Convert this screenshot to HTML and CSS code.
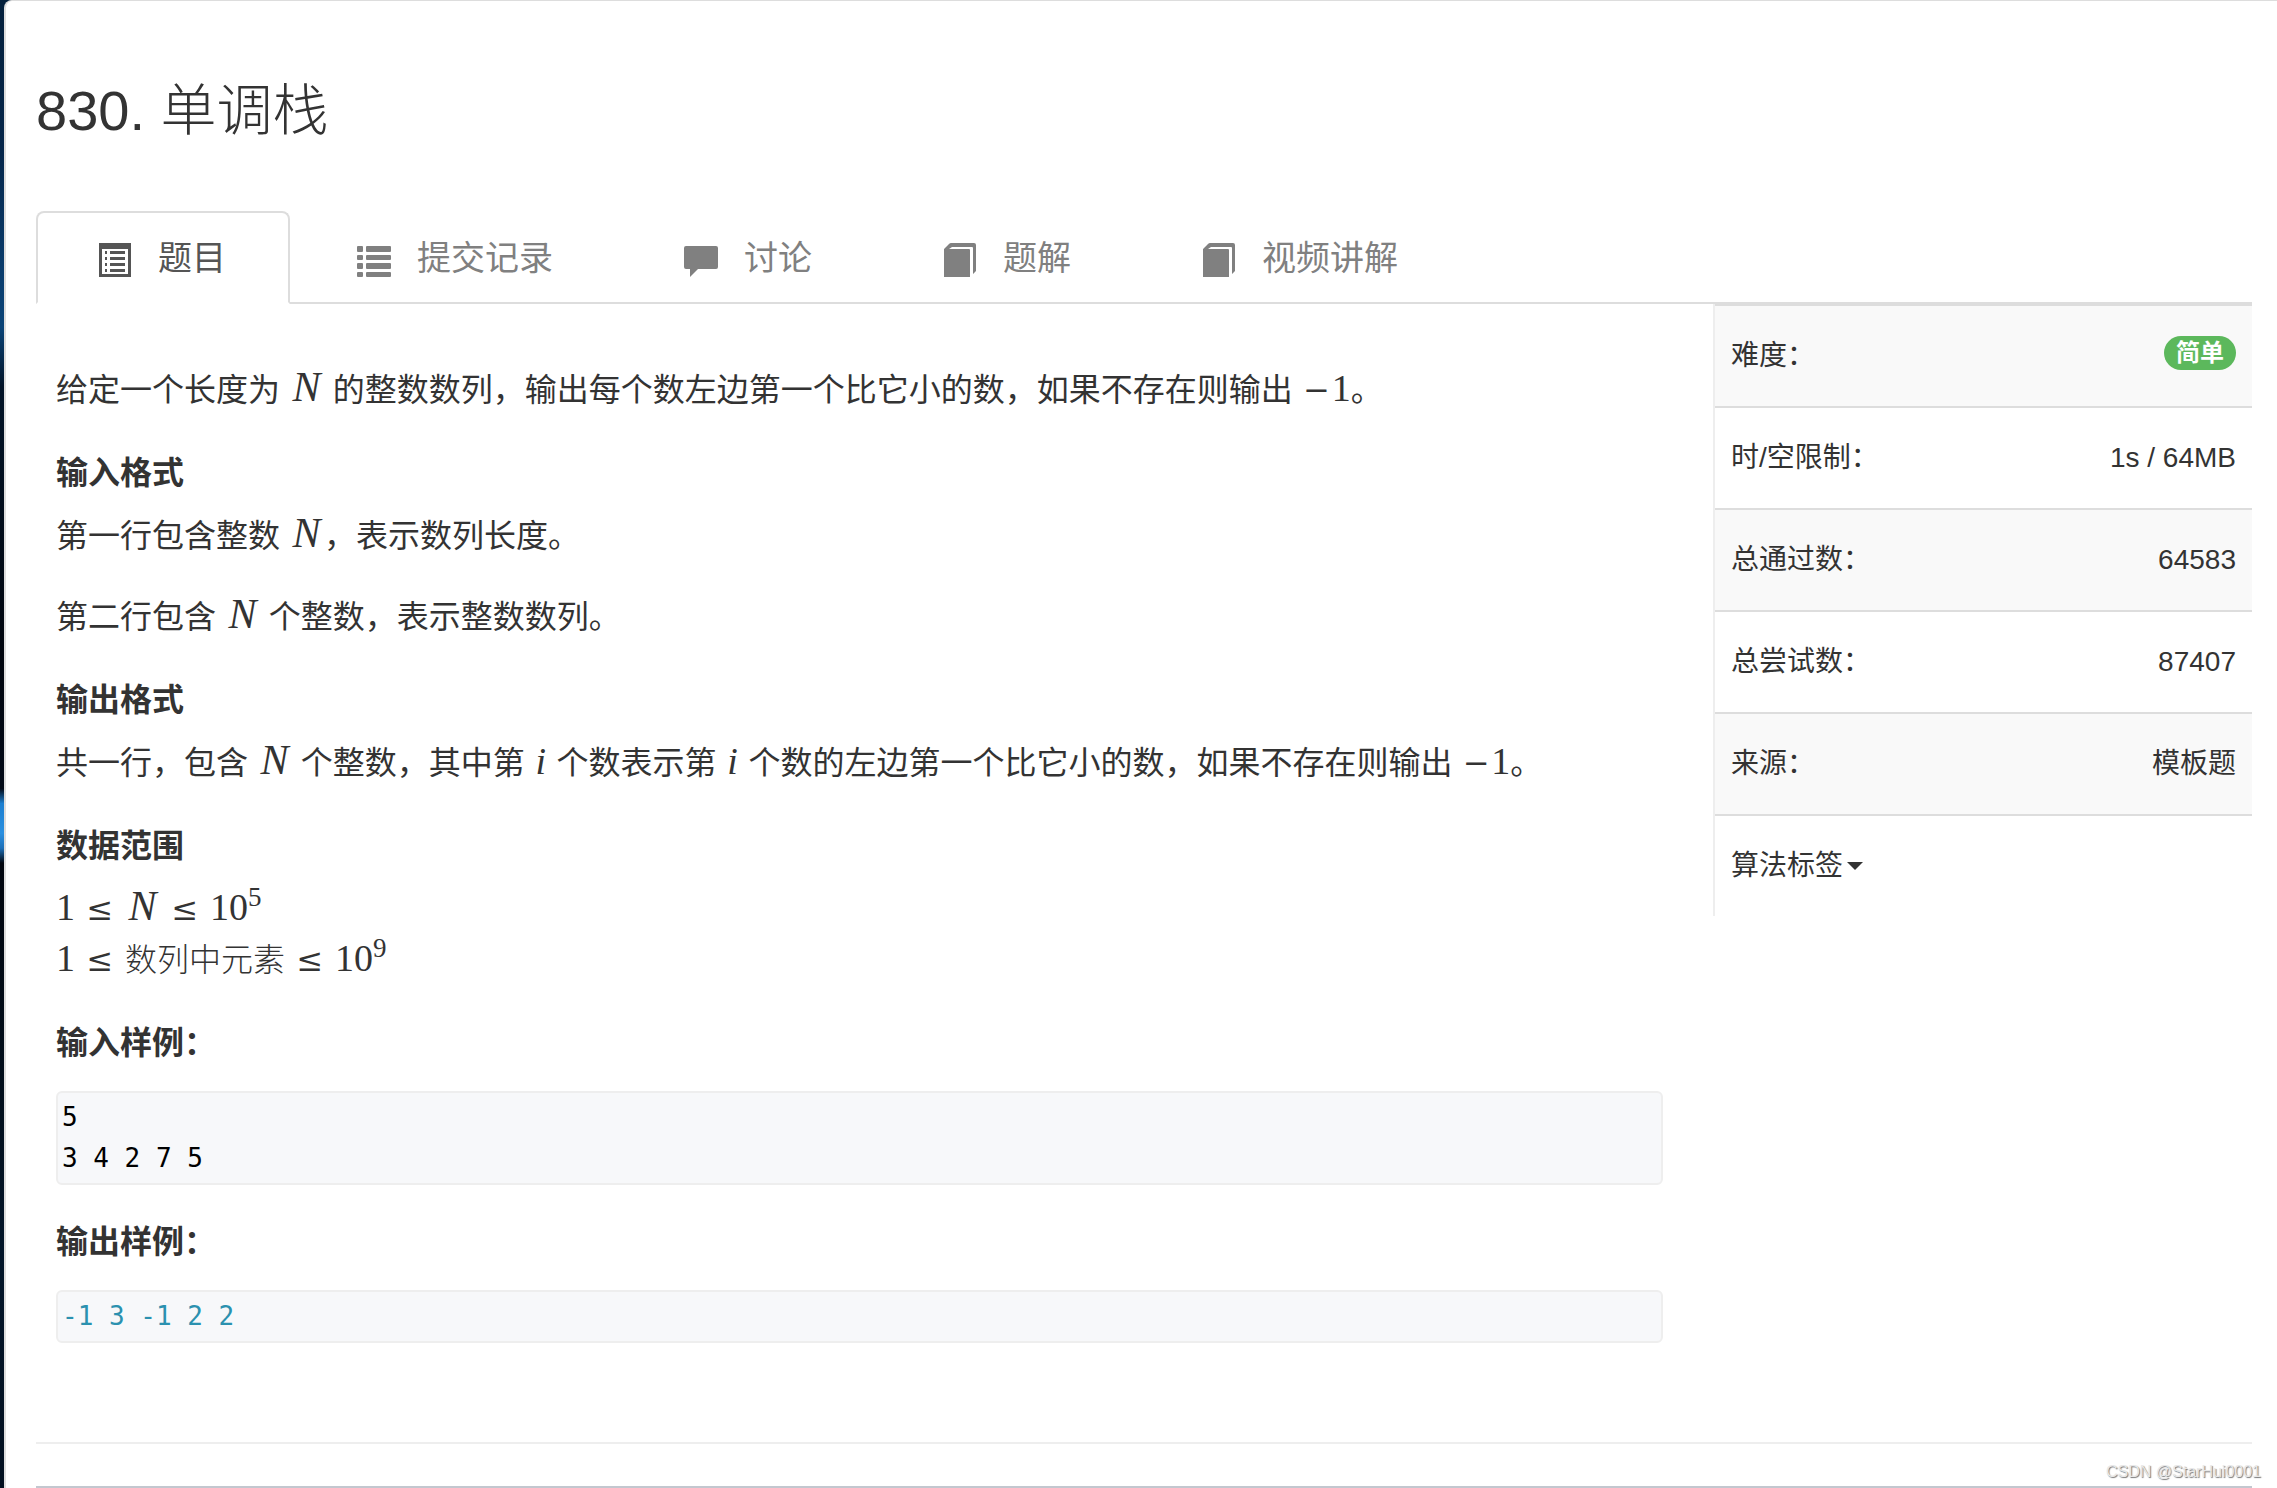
FILE: index.html
```html
<!DOCTYPE html>
<html lang="zh-CN">
<head>
<meta charset="utf-8">
<title>830. 单调栈</title>
<link rel="stylesheet" href="styles.css">
</head>
<body>
<main class="panel">
  <h1 class="title">830. 单调栈</h1>
  <nav class="tabs">
    <a class="tab tab-active" href="#problem">
      <svg class="icon" viewBox="0 0 34 34"><path fill-rule="evenodd" d="M1 0h32v34H1zM4 6v25h26V6z"/><path d="M7 8h2v3H7zM12 8h15v3H12zM7 14h2v3H7zM12 14h15v3H12zM7 20h2v3H7zM12 20h15v3H12zM7 26h2v3H7zM12 26h15v3H12z"/></svg>
      <span>题目</span>
    </a>
    <a class="tab" href="#submissions">
      <svg class="icon" viewBox="0 0 34 34"><g><rect x="0" y="3" width="6" height="6" rx="1"/><rect x="9" y="3" width="25" height="6" rx="1"/><rect x="0" y="12" width="6" height="5" rx="1"/><rect x="9" y="12" width="25" height="5" rx="1"/><rect x="0" y="20" width="6" height="6" rx="1"/><rect x="9" y="20" width="25" height="6" rx="1"/><rect x="0" y="29" width="6" height="5" rx="1"/><rect x="9" y="29" width="25" height="5" rx="1"/></g></svg>
      <span>提交记录</span>
    </a>
    <a class="tab" href="#discussion">
      <svg class="icon" viewBox="0 0 34 34"><path d="M2 3h30q2 0 2 2v19q0 2-2 2H14l-8 8v-8H2q-2 0-2-2V5q0-2 2-2z"/></svg>
      <span>讨论</span>
    </a>
    <a class="tab" href="#solutions">
      <svg class="icon" viewBox="0 0 34 34"><path d="M1 6L6 1Q7 0 8 0H31q2 0 2 2V28l-3 3V5q0-1-1-1H9L6 6H26q1 0 1 1V34H1z"/></svg>
      <span>题解</span>
    </a>
    <a class="tab" href="#videos">
      <svg class="icon" viewBox="0 0 34 34"><path d="M1 6L6 1Q7 0 8 0H31q2 0 2 2V28l-3 3V5q0-1-1-1H9L6 6H26q1 0 1 1V34H1z"/></svg>
      <span>视频讲解</span>
    </a>
  </nav>
  <div class="columns">
    <article class="statement" id="problem">
      <p>给定一个长度为 <i class="var">N</i> 的整数数列，输出每个数左边第一个比它小的数，如果不存在则输出 <span class="math"><span class="minus">−</span>1</span>。</p>
      <h2>输入格式</h2>
      <p>第一行包含整数 <i class="var">N</i>，表示数列长度。</p>
      <p>第二行包含 <i class="var">N</i> 个整数，表示整数数列。</p>
      <h2>输出格式</h2>
      <p>共一行，包含 <i class="var">N</i> 个整数，其中第 <i class="var var-narrow">i</i> 个数表示第 <i class="var var-narrow">i</i> 个数的左边第一个比它小的数，如果不存在则输出 <span class="math"><span class="minus">−</span>1</span>。</p>
      <h2>数据范围</h2>
      <p><span class="math">1<span class="rel">≤</span><i class="var">N</i><span class="rel">≤</span>10<sup>5</sup></span><br>
      <span class="math">1<span class="rel">≤</span><span class="mtext">数列中元素</span><span class="rel">≤</span>10<sup>9</sup></span></p>
      <h2>输入样例：</h2>
      <pre>5
3 4 2 7 5</pre>
      <h2>输出样例：</h2>
      <pre class="literal">-1 3 -1 2 2</pre>
    </article>
    <aside>
      <table class="info">
        <tr><th scope="row">难度：</th><td><span class="badge">简单</span></td></tr>
        <tr><th scope="row">时/空限制：</th><td>1s / 64MB</td></tr>
        <tr><th scope="row">总通过数：</th><td>64583</td></tr>
        <tr><th scope="row">总尝试数：</th><td>87407</td></tr>
        <tr><th scope="row">来源：</th><td>模板题</td></tr>
        <tr><td class="tags" colspan="2"><button class="toggle" type="button">算法标签<span class="caret"></span></button></td></tr>
      </table>
    </aside>
  </div>
  <hr class="rule">
  <div class="editor"></div>
</main>
<div class="watermark">CSDN @StarHui0001</div>
</body>
</html>
```
FILE: styles.css
```css
* { box-sizing: border-box; }

body {
  margin: 0;
  padding-left: 4px;
  min-height: 100vh;
  position: relative;
  overflow: hidden;
  background: linear-gradient(#04203c 0, #05264a 10%, #0a3c6c 18%, #0a4478 22%, #021428 26%, #01060f 44%, #020a18 53%, #1c7fd0 54%, #2a8fe0 56%, #1c6fb8 57%, #01060f 58%, #02101e 75%, #03162a 84%, #021020 100%);
  color: #333;
  font-family: "Liberation Sans", "Noto Sans CJK SC", sans-serif;
}

.panel {
  min-height: 100vh;
  padding: 76px 25px 0 30px;
  border: 2px solid #ddd;
  border-width: 1px 0 0 2px;
  border-top-left-radius: 8px;
  background: #fff;
}

.title {
  margin: 0 0 66px;
  font-size: 56px;
  line-height: 68px;
  font-weight: 300;
}

.tabs {
  display: flex;
  gap: 5px;
  border-bottom: 2px solid #ddd;
}

.tab {
  display: flex;
  align-items: center;
  gap: 26px;
  height: 93px;
  margin-bottom: -2px;
  padding: 0 62px 0 60px;
  border: 2px solid transparent;
  border-radius: 8px 8px 0 0;
  color: #808080;
  font-size: 34px;
  line-height: 48px;
  text-decoration: none;
}

.tab-active {
  border-color: #ddd;
  border-bottom-color: #fff;
  background: #fff;
  color: #555;
}

.icon {
  width: 34px;
  height: 34px;
  margin-top: 4px;
  fill: currentColor;
}

.columns {
  display: grid;
  grid-template-columns: 28fr 9fr;
  align-items: start;
}

.statement {
  padding: 61px 50px 0 20px;
  font-size: 32px;
  line-height: 51px;
}

.statement p { margin: 0 0 30px; }

.statement h2 {
  margin: 39px 0 20px;
  font-size: 32px;
  line-height: 36px;
}

.math, .var {
  font-family: "Liberation Serif", "Noto Sans CJK SC", serif;
  font-size: 38px;
  line-height: 0;
}

.var {
  display: inline-block;
  width: 35px;
  font-size: 42px;
  text-align: center;
}

.var-narrow {
  width: 14px;
  font-size: 38px;
}

.minus, .rel {
  display: inline-block;
  width: 30px;
  font-family: "DejaVu Serif", serif;
  font-size: 32px;
  text-align: center;
}

.rel { width: 50px; }

.mtext {
  font-size: 32px;
  font-weight: 300;
}

.math sup {
  font-size: 27px;
  line-height: 0;
}

pre {
  margin: 30px 0 0;
  padding: 4px;
  border: 2px solid #eee;
  border-radius: 6px;
  background: #f7f8fa;
  color: #000;
  font-family: "DejaVu Sans Mono", monospace;
  font-size: 26px;
  line-height: 41px;
}

.literal { color: #2b91af; }

.info {
  width: 100%;
  border-left: 2px solid #eee;
  border-collapse: separate;
  border-spacing: 0;
  font-size: 28px;
  line-height: 40px;
}

.info th, .info td {
  height: 102px;
  padding: 0 16px;
  border-top: 2px solid #ddd;
  font-weight: 400;
  text-align: left;
}

.info td { text-align: right; }

.info .tags { text-align: left; }

.info tr:nth-child(odd) { background: #f9f9f9; }

.info tr:nth-child(even) { background: #fff; }

.badge {
  display: inline-block;
  padding: 0 12px;
  border-radius: 17px;
  background: #5cb85c;
  color: #fff;
  font-size: 24px;
  font-weight: 700;
  line-height: 34px;
  vertical-align: 4px;
}

.toggle {
  display: inline-flex;
  align-items: center;
  gap: 4px;
  padding: 0;
  border: 0;
  background: none;
  color: inherit;
  font: inherit;
}

.caret {
  border: 8px solid transparent;
  border-top-color: currentColor;
  border-bottom: 0;
}

.rule {
  margin: 99px 0 42px;
  border: 0;
  border-top: 2px solid #eee;
}

.editor { border-top: 2px solid #c3c7cf; }

.watermark {
  position: absolute;
  right: 16px;
  bottom: 4px;
  color: #e8e8e8;
  font-size: 16px;
  line-height: 24px;
  text-shadow: 1px 1px 1px #777;
}
```
